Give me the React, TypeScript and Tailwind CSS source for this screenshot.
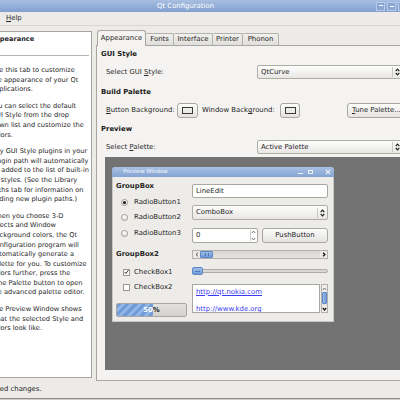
import React from "react";

const HELP: string[][] = [
  ["Use this tab to customize", "the appearance of your Qt", "applications."],
  ["You can select the default", "GUI Style from the drop", "down list and customize the", "colors."],
  [
    "Any GUI Style plugins in your",
    "plugin path will automatically",
    "be added to the list of built-in",
    "Qt styles. (See the Library",
    "Paths tab for information on",
    "adding new plugin paths.)",
  ],
  [
    "When you choose 3-D",
    "Effects and Window",
    "Background colors, the Qt",
    "Configuration program will",
    "automatically generate a",
    "palette for you. To customize",
    "colors further, press the",
    "Tune Palette button to open",
    "the advanced palette editor.",
  ],
  ["The Preview Window shows", "what the selected Style and", "colors look like."],
];

function UpDown() {
  return (
    <svg width="5" height="8" viewBox="0 0 5 8" className="shrink-0">
      <path d="M0.7 3.2 L2.5 1.2 L4.3 3.2" fill="none" stroke="#1e1e1e" strokeWidth="1.2" />
      <path d="M0.7 4.8 L2.5 6.8 L4.3 4.8" fill="none" stroke="#1e1e1e" strokeWidth="1.2" />
    </svg>
  );
}

function Combo({ text, className }: { text: string; className: string }) {
  return (
    <div
      className={`flex items-center rounded-[2px] border border-[#aeaca7] bg-[linear-gradient(#fdfdfc,#e8e7e4)] ${className}`}
    >
      <span className="flex-1 pl-[3px]">{text}</span>
      <div className="flex h-[10px] items-center border-l border-[#c9c7c2] pl-[2px] pr-[2px]">
        <UpDown />
      </div>
    </div>
  );
}

function ColorButton({ className }: { className: string }) {
  return (
    <div
      className={`flex h-[15px] shrink-0 items-center justify-center rounded-[3px] border border-[#a9a7a2] bg-[linear-gradient(#fcfcfb,#e4e3e0)] ${className}`}
    >
      <div className="h-[7px] w-[11px] border border-[#3a3a3a] bg-[#ecebe8]" />
    </div>
  );
}

function Radio({ label, checked }: { label: string; checked?: boolean }) {
  return (
    <div className="flex h-[10px] items-center pl-[5px]">
      <div className="flex h-[7px] w-[7px] items-center justify-center rounded-full border border-[#9a9893] bg-[linear-gradient(#ffffff,#e6e5e2)]">
        {checked && <div className="h-[3px] w-[3px] rounded-full bg-[#111]" />}
      </div>
      <span className="ml-[6px]">{label}</span>
    </div>
  );
}

function Check({ label, checked }: { label: string; checked?: boolean }) {
  return (
    <div className="flex h-[10px] items-center pl-[7px]">
      <div className="flex h-[7px] w-[7px] items-center justify-center border border-[#9a9893] bg-white">
        {checked && (
          <svg width="6" height="6" viewBox="0 0 6 6">
            <path d="M0.8 3 L2.3 4.8 L5.3 0.8" fill="none" stroke="#1a1a1a" strokeWidth="1.1" />
          </svg>
        )}
      </div>
      <span className="ml-[4px]">{label}</span>
    </div>
  );
}

function PreviewWindow() {
  return (
    <div className="flex h-[155px] w-[222px] shrink-0 flex-col">
      {/* title bar */}
      <div className="flex h-[10px] shrink-0 items-center rounded-t-[3px] bg-[linear-gradient(#a9c1e4,#84a3d2)] pl-[11px] text-[5.5px] text-[#f4f7fc]">
        <span>Preview Window</span>
        <div className="ml-auto mr-[3px] flex items-center gap-[5px]">
          <div className="mt-[3px] h-[1px] w-[5px] bg-[#eef3fa]" />
          <div className="h-[4px] w-[5px] border border-[#eef3fa]" />
          <svg width="6" height="6" viewBox="0 0 6 6" className="ml-[7px]">
            <path d="M0.8 0.8 L5.2 5.2 M5.2 0.8 L0.8 5.2" stroke="#eef3fa" strokeWidth="1.2" />
          </svg>
        </div>
      </div>
      {/* body */}
      <div className="flex flex-1 border-x border-b border-[#c8c7c3] bg-[#edece9] pl-[3px]">
        <div className="flex w-[76px] shrink-0 flex-col">
          <div className="mt-[4px] flex h-[10px] items-center font-bold">GroupBox</div>
          <div className="mt-[6px]">
            <Radio label="RadioButton1" checked />
          </div>
          <div className="mt-[5px]">
            <Radio label="RadioButton2" />
          </div>
          <div className="mt-[6px]">
            <Radio label="RadioButton3" />
          </div>
          <div className="mt-[11px] flex h-[10px] items-center font-bold">GroupBox2</div>
          <div className="mt-[8px]">
            <Check label="CheckBox1" checked />
          </div>
          <div className="mt-[5px]">
            <Check label="CheckBox2" />
          </div>
          {/* progress bar */}
          <div className="relative mt-[11px] flex h-[14px] w-[71px] items-center justify-center overflow-hidden rounded-[2px] border border-[#a9a7a2] bg-[linear-gradient(#e2e1de,#d3d2ce)] font-bold text-[#1a1a1a]">
            <span>50%</span>
            <div className="absolute left-0 top-0 h-full w-[36px] overflow-hidden bg-[repeating-linear-gradient(135deg,#6f9bd8_0px,#6f9bd8_3px,#94b6e6_3px,#94b6e6_6px)]">
              <div className="flex h-full w-[69px] items-center justify-center text-white">50%</div>
            </div>
          </div>
        </div>

        <div className="flex w-[136px] shrink-0 flex-col">
          <div className="mt-[7px] flex h-[14px] items-center rounded-[2px] border border-[#a9a7a2] bg-white pl-[3px]">
            LineEdit
          </div>
          <Combo text="ComboBox" className="mt-[7px] h-[15px]" />
          <div className="mt-[8px] flex h-[15px] gap-[4px]">
            <div className="flex w-[66px] items-center rounded-[2px] border border-[#a9a7a2] bg-white pl-[3px]">
              <span className="flex-1">0</span>
              <div className="mr-[1px] flex h-[11px] w-[6px] flex-col items-center justify-between border-l border-[#d0cec9]">
                <svg width="5" height="4" viewBox="0 0 5 4">
                  <path d="M0.8 3 L2.5 1 L4.2 3" fill="none" stroke="#777" strokeWidth="1" />
                </svg>
                <svg width="5" height="4" viewBox="0 0 5 4">
                  <path d="M0.8 1 L2.5 3 L4.2 1" fill="none" stroke="#777" strokeWidth="1" />
                </svg>
              </div>
            </div>
            <div className="flex flex-1 items-center justify-center rounded-[3px] border border-[#a9a7a2] bg-[linear-gradient(#fcfcfb,#e4e3e0)]">
              PushButton
            </div>
          </div>
          {/* horizontal scrollbar */}
          <div className="mt-[7px] flex h-[9px] border border-[#b3b1ac] bg-[linear-gradient(#d6d5d1,#e6e5e2)]">
            <div className="flex w-[7px] items-center justify-center bg-[#ebeae7]">
              <svg width="4" height="5" viewBox="0 0 4 5">
                <path d="M3 0.7 L1 2.5 L3 4.3" fill="none" stroke="#555" strokeWidth="1" />
              </svg>
            </div>
            <div className="flex w-[13px] items-center justify-center rounded-[1px] border border-[#5c87c6] bg-[linear-gradient(#9dbde9,#7099d6)]">
              <div className="h-[3px] w-[4px] border-x border-[#4f78b6]" />
            </div>
            <div className="flex-1" />
            <div className="flex w-[7px] items-center justify-center bg-[#ebeae7]">
              <svg width="4" height="5" viewBox="0 0 4 5">
                <path d="M1 0.7 L3 2.5 L1 4.3" fill="none" stroke="#111" strokeWidth="1.2" />
              </svg>
            </div>
          </div>
          {/* slider */}
          <div className="relative mt-[8px] flex h-[8px] items-center">
            <div className="h-[4px] w-full rounded-[2px] border border-[#aeaca7] bg-[#d9d8d4]" />
            <div className="absolute left-0 top-0 flex h-[8px] w-[11px] items-center justify-center rounded-[2px] border border-[#5c87c6] bg-[linear-gradient(#a2c0ea,#7099d6)]">
              <div className="h-[1px] w-[5px] bg-[#4f78b6]" />
            </div>
          </div>
          {/* text edit */}
          <div className="mt-[9px] flex h-[29px] gap-[1px]">
            <div className="w-[128px] overflow-hidden border border-[#a9a7a2] bg-white pl-[3px] pt-[2px] text-[#3a3af2]">
              <div className="flex h-[10px] items-center">
                <span className="underline">http://qt.nokia.com</span>
              </div>
              <div className="mt-[7px] flex h-[10px] items-center">
                <span className="underline">http://www.kde.org</span>
              </div>
            </div>
            <div className="flex w-[7px] flex-col border border-[#b3b1ac] bg-[#e2e1dd]">
              <div className="flex h-[7px] items-center justify-center bg-[#f0efec]">
                <svg width="5" height="4" viewBox="0 0 5 4">
                  <path d="M0.8 3 L2.5 1 L4.2 3" fill="none" stroke="#777" strokeWidth="1" />
                </svg>
              </div>
              <div className="h-[12px] rounded-[1px] border border-[#5c87c6] bg-[linear-gradient(90deg,#9dbde9,#7099d6)]" />
              <div className="flex-1" />
              <div className="flex h-[7px] items-center justify-center bg-[#f0efec]">
                <svg width="5" height="4" viewBox="0 0 5 4">
                  <path d="M0.8 1 L2.5 3 L4.2 1" fill="none" stroke="#111" strokeWidth="1.2" />
                </svg>
              </div>
            </div>
          </div>
        </div>
      </div>
    </div>
  );
}

export default function App() {
  return (
    <div className="flex h-[400px] w-[400px] flex-col overflow-hidden bg-[#ecebe8] font-['DejaVu_Sans','Bitstream_Vera_Sans',sans-serif] text-[6.9px] leading-none text-[#262626]">
      {/* window title */}
      <div className="flex h-[12px] shrink-0 items-center bg-[linear-gradient(#a9bfe1,#819fd0)]">
        <span className="ml-[157px] text-white">Qt Configuration</span>
        <div className="ml-auto mr-[-7px] flex gap-[2px]">
          <div className="flex h-[9px] w-[9px] items-start justify-center border border-[#b9c9e5] bg-[#8aa6d4] pt-[2px]">
            <div className="h-[1px] w-[4px] bg-white" />
          </div>
          <div className="flex h-[9px] w-[9px] items-center justify-center border border-[#b9c9e5] bg-[#8aa6d4]">
            <div className="h-[1px] w-[4px] bg-white" />
          </div>
          <div className="h-[9px] w-[9px] border border-[#b9c9e5] bg-[#8aa6d4]" />
        </div>
      </div>

      {/* menu */}
      <div className="flex h-[14px] shrink-0 items-center border-b border-[#d9d7d3] pl-[6px]">
        <span>
          <span className="underline">H</span>elp
        </span>
      </div>

      {/* main */}
      <div className="flex h-[355px] shrink-0 pt-[4px]">
        {/* help browser */}
        <div className="mt-[1px] h-[347px] w-[92px] shrink-0 overflow-hidden border-y border-r border-[#a5a39e] bg-white text-[6.6px]">
          <div className="ml-[-10px] flex h-[14px] items-center whitespace-nowrap font-bold">Appearance</div>
          <div className="mr-[2px] mt-[9px] h-[1px] bg-[#b7b5b0]" />
          <div className="ml-[-9px] mt-[10px] flex flex-col gap-[7px] whitespace-nowrap">
            {HELP.map((para, i) => (
              <div key={i}>
                {para.map((line) => (
                  <div key={line} className="leading-[9.6px]">
                    {line}
                  </div>
                ))}
              </div>
            ))}
          </div>
        </div>

        {/* tab widget */}
        <div className="ml-[4px] flex w-[320px] shrink-0 flex-col">
          <div className="flex h-[15px] shrink-0 items-end pl-[1px]">
            <div className="relative z-[1] mb-[-1px] flex h-[16px] w-[49px] items-center justify-center rounded-t-[3px] border-x border-t border-[#a8a6a1] bg-[#f4f3f1] pb-[1px]">
              Appearance
            </div>
            <div className="flex h-[12px] w-[28px] items-center justify-center rounded-t-[2px] border-r border-t border-[#b3b1ac] bg-[linear-gradient(#f1f0ed,#e0dfdb)]">
              Fonts
            </div>
            <div className="flex h-[12px] w-[39px] items-center justify-center rounded-t-[2px] border-r border-t border-[#b3b1ac] bg-[linear-gradient(#f1f0ed,#e0dfdb)]">
              Interface
            </div>
            <div className="flex h-[12px] w-[30px] items-center justify-center rounded-t-[2px] border-r border-t border-[#b3b1ac] bg-[linear-gradient(#f1f0ed,#e0dfdb)]">
              Printer
            </div>
            <div className="flex h-[12px] w-[36px] items-center justify-center rounded-t-[2px] border-r border-t border-[#b3b1ac] bg-[linear-gradient(#f1f0ed,#e0dfdb)]">
              Phonon
            </div>
          </div>

          <div className="flex flex-1 flex-col border-y border-l border-[#a8a6a1] bg-[#f4f3f1] pl-[4px]">
            <div className="flex h-[16px] items-center font-bold text-[#1a1a1a]">GUI Style</div>
            <div className="flex h-[20px] items-center">
              <span className="w-[156px] shrink-0 pl-[5px]">
                Select GUI <span className="underline">S</span>tyle:
              </span>
              <Combo text="QtCurve" className="h-[14px] w-[146px] shrink-0" />
            </div>
            <div className="flex h-[21px] items-center font-bold text-[#1a1a1a]">Build Palette</div>
            <div className="flex h-[15px] items-center">
              <span className="w-[76px] shrink-0 pl-[5px]">
                <span className="underline">B</span>utton Background:
              </span>
              <ColorButton className="w-[21px]" />
              <span className="ml-[4px] w-[78px] shrink-0">
                Window Back<span className="underline">g</span>round:
              </span>
              <ColorButton className="w-[20px]" />
              <div className="ml-[47px] flex h-[15px] w-[56px] shrink-0 items-center rounded-[3px] border border-[#a9a7a2] bg-[linear-gradient(#fcfcfb,#e4e3e0)] pl-[4px]">
                <span>
                  <span className="underline">T</span>une Palette...
                </span>
              </div>
            </div>
            <div className="flex h-[22px] items-center font-bold text-[#1a1a1a]">Preview</div>
            <div className="flex h-[14px] items-center">
              <span className="w-[156px] shrink-0 pl-[5px]">
                Select <span className="underline">P</span>alette:
              </span>
              <Combo text="Active Palette" className="h-[14px] w-[146px] shrink-0" />
            </div>
            <div className="ml-[4px] mt-[3px] h-[213px] bg-[#737373] pl-[7px] pt-[10px]">
              <PreviewWindow />
            </div>
          </div>
        </div>
      </div>

      {/* status bar */}
      <div className="flex h-[17px] shrink-0 items-center">
        <span className="ml-[-13px]">Saved changes.</span>
      </div>
      <div className="h-[1px] shrink-0 bg-[#8f8d89]" />
      <div className="h-[1px] shrink-0 bg-[#cfcdc9]" />
    </div>
  );
}
